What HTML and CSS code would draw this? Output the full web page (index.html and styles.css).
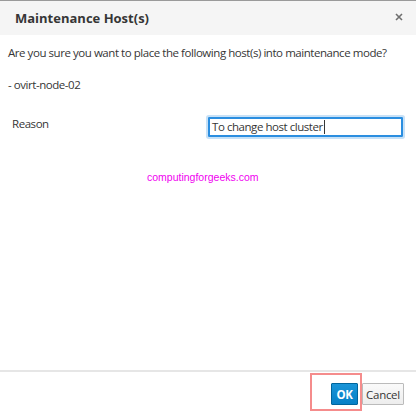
FILE: index.html
```html
<!DOCTYPE html>
<html lang="en">
<head>
    <meta charset="UTF-8">
    <title>Maintenance Host(s)</title>
    <link rel="stylesheet" href="styles.css">
</head>
<body>
  <div class="modal">
    <div class="modal-header">
      <h4 class="title">Maintenance Host(s)</h4>
      <svg class="close" width="8" height="8" viewBox="0 0 8 8">
        <path d="M1 1 L7 7 M7 1 L1 7" stroke="#6f6f6f" stroke-width="1.6"/>
      </svg>
    </div>
    <div class="modal-body">
      <p class="question">Are you sure you want to place the following host(s) into maintenance mode?</p>
      <p class="hosts">- ovirt-node-02</p>
      <div class="reason-row">
        <label class="reason-label">Reason</label>
        <div class="reason-input">To change host cluster<span class="caret"></span></div>
      </div>
      <p class="watermark">computingforgeeks.com</p>
    </div>
    <div class="modal-footer">
      <span class="highlight"><button class="btn btn-primary">OK</button></span>
      <button class="btn btn-default">Cancel</button>
    </div>
  </div>
</body>
</html>
```

FILE: styles.css
```css
body {
    margin: 0;
    font-family: "Open Sans", "Liberation Sans", sans-serif;
    font-size: 11.5px;
    letter-spacing: -0.45px;
    color: #363636;
    background: #fff;
}
.modal {
    width: 416px;
    height: 420px;
    display: flex;
    flex-direction: column;
}
.modal-header {
    height: 34px;
    border-top: 1px solid #9a9a9a;
    background-color: #f5f5f5;
    display: flex;
    align-items: center;
    justify-content: space-between;
    padding: 0 13px 0 15px;
}
.title {
    margin: 0;
    font-size: 13px;
    font-weight: 700;
    letter-spacing: 0;
    color: #363636;
}
.close {
    display: block;
    margin-top: -3px;
}
.modal-body {
    flex: 1;
    padding: 10px 8px 0 8px;
}
.question {
    margin: 0;
    line-height: 16px;
    white-space: nowrap;
}
.hosts {
    margin: 16px 0 0 0;
    line-height: 16px;
}
.reason-row {
    display: flex;
    align-items: flex-start;
    margin-top: 24px;
    padding-left: 4px;
}
.reason-label {
    width: 196px;
    line-height: 16px;
    margin-top: -1px;
}
.reason-input {
    width: 189px;
    height: 16px;
    line-height: 16px;
    border: 2px solid #2b8ee0;
    box-shadow: 0 0 0 2px #c7e1f7;
    border-radius: 1px;
    padding-left: 2px;
    color: #363636;
}
.caret {
    display: inline-block;
    width: 1px;
    height: 14px;
    margin-left: 1px;
    background: #363636;
    vertical-align: -3px;
}
.watermark {
    margin: 34px 0 0 139px;
    font-family: "Liberation Sans", Arial, sans-serif;
    font-size: 10.5px;
    line-height: 12px;
    letter-spacing: 0;
    color: #f000f0;
}
.modal-footer {
    height: 47px;
    border-top: 2px solid #e6e6e6;
    display: flex;
    justify-content: flex-end;
    align-items: flex-start;
    padding: 1px 12px 0 0;
}
.highlight {
    display: flex;
    border: 2px solid #f58c8c;
    padding: 8px 2px 4px 19px;
}
.btn {
    font-family: "Open Sans", "Liberation Sans", sans-serif;
    font-size: 11.5px;
    letter-spacing: -0.3px;
    height: 22px;
    border-radius: 1px;
    padding: 0 3px;
}
.btn-primary {
    width: 27px;
    background: linear-gradient(#1a95d8, #0680c6);
    border: 1px solid #00659c;
    color: #fff;
    font-weight: 700;
}
.btn-default {
    margin-top: 10px;
    width: 42px;
    background: linear-gradient(#fafafa, #ededed);
    border: 1px solid #bbb;
    color: #363636;
}
```
